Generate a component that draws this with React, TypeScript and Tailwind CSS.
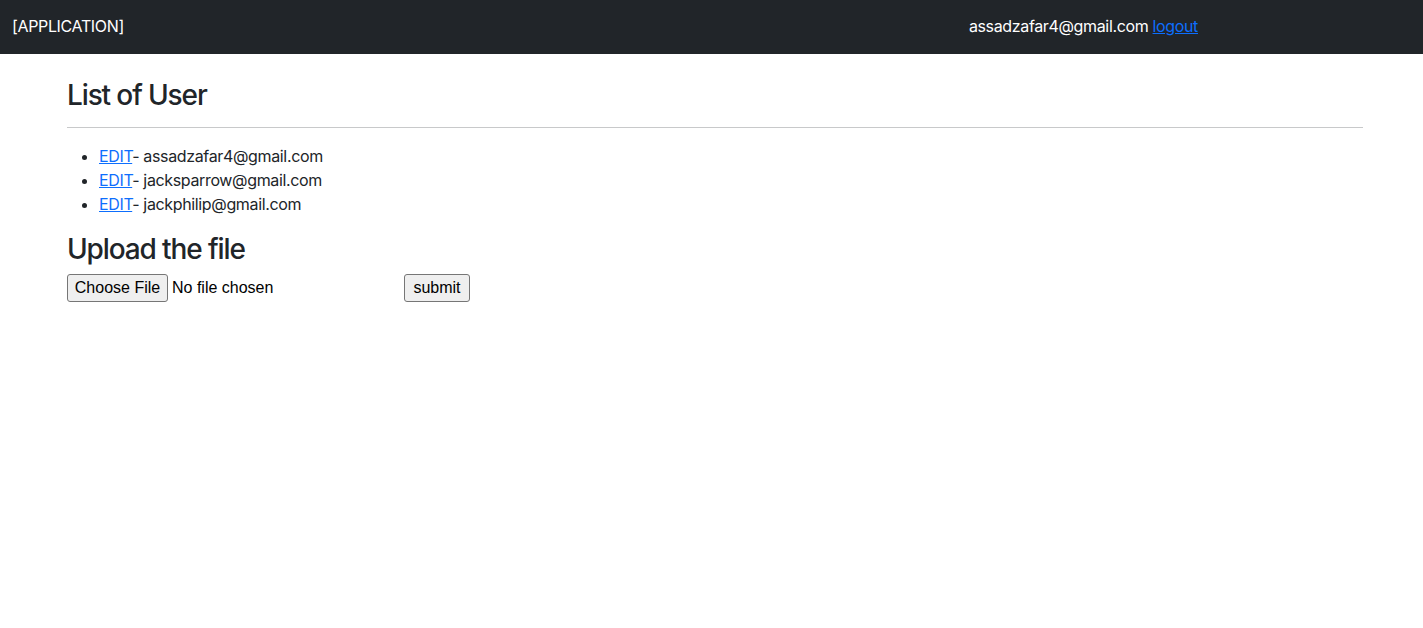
import React from 'react';

const users = ['assadzafar4@gmail.com', 'jacksparrow@gmail.com', 'jackphilip@gmail.com'];

export default function App() {
  return (
    <div className="min-h-screen bg-white text-[16px] leading-6 tracking-[-0.022em] text-[#212529]" style={{ fontFamily: 'Inter, "Noto Sans", sans-serif' }}>
      {/* top bar */}
      <nav className="flex h-[54px] items-center justify-between bg-[#212529] pb-[2px] pl-3 pr-[225px] text-white">
        <span>[APPLICATION]</span>
        <span>
          assadzafar4@gmail.com{' '}
          <a href="#" className="text-[#0d6efd] underline">logout</a>
        </span>
      </nav>

      <main className="pl-[67px] pr-[60px]">
        <h3 className="mt-6 text-[28px] font-medium leading-[34px] tracking-[-0.04em]">List of User</h3>
        <hr className="mt-[15px] mb-4 border-t border-[#c8c9ca]" />

        <ul className="mb-4 list-disc pl-8">
          {users.map((u) => (
            <li key={u}>
              <a href="#" className="text-[#0d6efd] underline">EDIT</a>- {u}
            </li>
          ))}
        </ul>

        <h3 className="text-[28px] font-medium leading-[34px] tracking-[-0.04em]">Upload the file</h3>
        <form className="mt-2 flex items-center tracking-normal" style={{ fontFamily: '"Liberation Sans", Arial, sans-serif' }}>
          <button type="button" className="h-[28px] w-[101px] rounded-[3px] border border-[#767676] bg-[#efefef] text-[16px] text-black">
            Choose File
          </button>
          <span className="ml-1 w-[232px] text-black">No file chosen</span>
          <button type="button" className="h-[28px] w-[66px] rounded-[3px] border border-[#767676] bg-[#efefef] text-[16px] text-black">
            submit
          </button>
        </form>
      </main>
    </div>
  );
}
